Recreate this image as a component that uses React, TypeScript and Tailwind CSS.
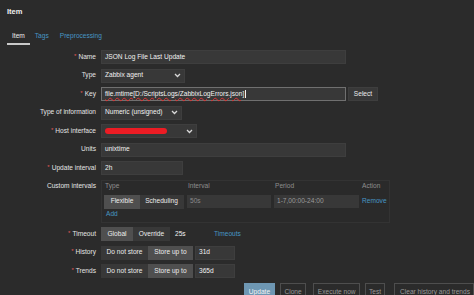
import React from "react";

const font = { fontFamily: '"Liberation Sans", Arial, sans-serif' };

function Req() {
  return <span className="text-[#e45959] mr-[2px] text-[6px] relative -top-[1px]">*</span>;
}

function Chevron() {
  return (
    <svg width="7" height="5" viewBox="0 0 7 5" className="shrink-0">
      <path d="M1 1 L3.5 3.5 L6 1" stroke="#d8d8d8" strokeWidth="1.3" fill="none" />
    </svg>
  );
}

function Row({ label, req, children }: { label: string; req?: boolean; children: React.ReactNode }) {
  return (
    <div className="flex items-center h-[14px]">
      <div className="w-[97px] text-right text-[#e4e4e4] pr-[1px]">
        {req && <Req />}
        {label}
      </div>
      <div className="ml-[4px] flex items-center h-full">{children}</div>
    </div>
  );
}

function Input({ w, value }: { w: string; value: string }) {
  return (
    <div className={`${w} h-[14px] bg-[#383838] border border-[#3e3e3e] flex items-center px-[3px] text-[#f2f2f2]`}>
      {value}
    </div>
  );
}

function Select({ w, value }: { w: string; value: string }) {
  return (
    <div className={`${w} h-[14px] bg-[#383838] border border-[#3e3e3e] flex items-center justify-between px-[3px] text-[#f2f2f2]`}>
      <span>{value}</span>
      <Chevron />
    </div>
  );
}

function Seg({ items, active }: { items: { t: string; w: string }[]; active: number }) {
  return (
    <div className="flex h-[14px] bg-[#383838]">
      {items.map((it, i) => (
        <div
          key={it.t}
          className={`${it.w} h-full flex items-center justify-center text-[#ececec] ${i === active ? "bg-[#4f4f4f]" : ""}`}
        >
          {it.t}
        </div>
      ))}
    </div>
  );
}

export default function App() {
  return (
    <div style={font} className="w-[474px] h-[295px] overflow-hidden bg-[#2b2b2b] text-[6.6px] leading-none">
      {/* header */}
      <div className="h-[24px] pl-[7px] flex items-center text-[7.5px] font-bold text-[#f0f0f0]">Item</div>

      {/* tabs */}
      <div className="h-[21px] pl-[7px] flex items-end">
        <div className="px-[5px] pb-[3px] border-b-2 border-[#c9c9c9] text-[#ececec]">Item</div>
        <div className="ml-[5px] pb-[5px] text-[#4796c4]">Tags</div>
        <div className="ml-[11px] pb-[5px] text-[#4796c4]">Preprocessing</div>
      </div>

      {/* form */}
      <div className="mt-[5px] flex flex-col gap-[4.5px]">
        <Row label="Name" req>
          <Input w="w-[245px]" value="JSON Log File Last Update" />
        </Row>
        <Row label="Type">
          <Select w="w-[84px]" value="Zabbix agent" />
        </Row>
        <Row label="Key" req>
          <div className="w-[245px] h-[14px] bg-[#383838] border border-[#707070] flex items-center px-[3px] text-[#f2f2f2]">
            <span className="underline decoration-wavy decoration-[#d33] underline-offset-[1px]">
              file.mtime[D:/ScriptsLogs/ZabbixLogErrors.json]
            </span>
            <span className="ml-[1px] w-px h-[8px] bg-[#f2f2f2]" />
          </div>
          <div className="ml-[2px] w-[30px] h-[14px] bg-[#383838] border border-[#3e3e3e] flex items-center justify-center text-[#ececec]">
            Select
          </div>
        </Row>
        <Row label="Type of information">
          <Select w="w-[81px]" value="Numeric (unsigned)" />
        </Row>
        <Row label="Host interface" req>
          <div className="w-[96px] h-[14px] bg-[#383838] border border-[#3e3e3e] flex items-center justify-between px-[3px]">
            <span className="w-[62px] h-[6px] rounded-full bg-[#ec1c24]" />
            <Chevron />
          </div>
        </Row>
        <Row label="Units">
          <Input w="w-[245px]" value="unixtime" />
        </Row>
        <Row label="Update interval" req>
          <Input w="w-[82px]" value="2h" />
        </Row>

        {/* custom intervals */}
        <div className="flex">
          <div className="w-[97px] pt-[3px] text-right text-[#e4e4e4] pr-[1px]">Custom intervals</div>
          <div className="ml-[4px] w-[289px] border border-[#333333] bg-[#2a2a2a] pl-[2px] pb-[2px] flex flex-col">
            <div className="h-[12px] flex items-center text-[#8e8e8e]">
              <div className="w-[80px] pl-[1px]">Type</div>
              <div className="ml-[3px] w-[84px] pl-[1px]">Interval</div>
              <div className="ml-[3px] w-[85px] pl-[1px]">Period</div>
              <div className="ml-[3px]">Action</div>
            </div>
            <div className="mt-[2px] h-[13px] flex items-center">
              <div className="w-[80px] h-full">
                <Seg
                  items={[
                    { t: "Flexible", w: "w-[36px]" },
                    { t: "Scheduling", w: "w-[43px]" },
                  ]}
                  active={0}
                />
              </div>
              <div className="ml-[3px] w-[84px] h-full bg-[#383838] flex items-center px-[3px] text-[#8a8a8a]">50s</div>
              <div className="ml-[3px] w-[85px] h-full bg-[#383838] flex items-center px-[3px] text-[#9a9a9a]">
                1-7,00:00-24:00
              </div>
              <div className="ml-[3px] text-[#4796c4]">Remove</div>
            </div>
            <div className="h-[10px] mt-[2px] flex items-center pl-[2px] text-[#4796c4]">Add</div>
          </div>
        </div>

        <Row label="Timeout" req>
          <Seg
            items={[
              { t: "Global", w: "w-[32px]" },
              { t: "Override", w: "w-[37px]" },
            ]}
            active={0}
          />
          <div className="ml-[2px] w-[38px] h-[14px] flex items-center px-[3px] text-[#f2f2f2]">25s</div>
          <div className="ml-[4px] text-[#4796c4]">Timeouts</div>
        </Row>
        <Row label="History" req>
          <Seg
            items={[
              { t: "Do not store", w: "w-[47px]" },
              { t: "Store up to", w: "w-[45px]" },
            ]}
            active={1}
          />
          <Input w="ml-[2px] w-[40px]" value="31d" />
        </Row>
        <Row label="Trends" req>
          <Seg
            items={[
              { t: "Do not store", w: "w-[47px]" },
              { t: "Store up to", w: "w-[45px]" },
            ]}
            active={1}
          />
          <Input w="ml-[2px] w-[40px]" value="365d" />
        </Row>
      </div>

      {/* buttons */}
      <div className="mt-[5px] pl-[244px] flex h-[18px] whitespace-nowrap">
        <div className="w-[33px] h-full bg-[#6e97b3] text-[#f4f4f4] flex items-center justify-center">Update</div>
        <div className="ml-[5px] w-[28px] h-full border border-[#4e4e4e] text-[#9a9a9a] flex items-center justify-center">Clone</div>
        <div className="ml-[7px] w-[50px] h-full border border-[#4e4e4e] text-[#9a9a9a] flex items-center justify-center">Execute now</div>
        <div className="ml-[5px] w-[21px] h-full border border-[#4e4e4e] text-[#9a9a9a] flex items-center justify-center">Test</div>
        <div className="ml-[9px] w-[80px] h-full border border-[#4e4e4e] text-[#9a9a9a] flex items-center pl-[5px] shrink-0">Clear history and trends</div>
      </div>
    </div>
  );
}
